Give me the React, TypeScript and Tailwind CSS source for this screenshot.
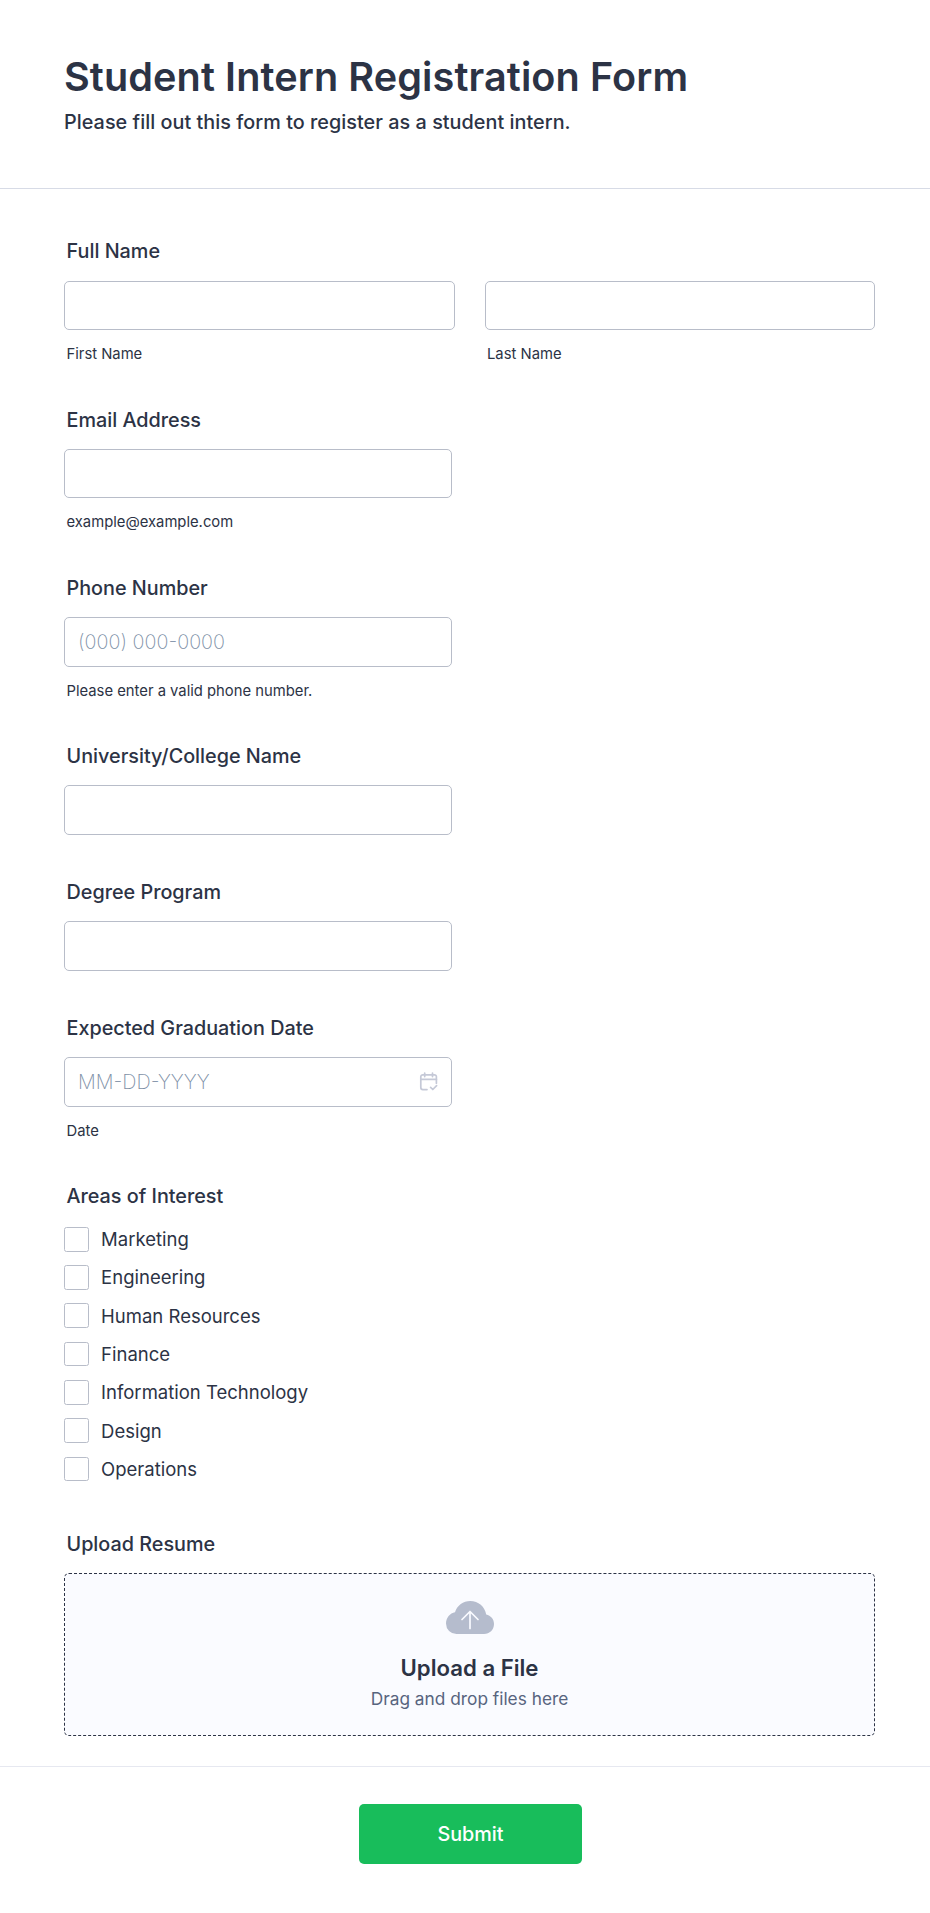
import { useState } from "react";
import type { ReactNode } from "react";

const interests = [
  "Marketing",
  "Engineering",
  "Human Resources",
  "Finance",
  "Information Technology",
  "Design",
  "Operations",
];

function Label({ children }: { children: ReactNode }) {
  return <div className="pl-[2.5px] text-[19.8px] leading-6 font-medium">{children}</div>;
}

function TextInput({ placeholder = "", name }: { placeholder?: string; name: string }) {
  return (
    <input
      type="text"
      aria-label={name}
      placeholder={placeholder}
      className="block w-full h-[49.4px] px-[13px] border border-[#b8bdc9] rounded-[5px] bg-white text-[19.8px] font-extralight outline-none placeholder:text-[#7d8fa6] focus:border-blue-500"
    />
  );
}

function Helper({ children }: { children: ReactNode }) {
  return <div className="mt-[17px] pl-[2.5px] text-[14.8px] leading-[15.1px]">{children}</div>;
}

function Field({ label, helper, placeholder, icon }: { label: string; helper?: string; placeholder?: string; icon?: ReactNode }) {
  return (
    <div className="w-[388px]">
      <Label>{label}</Label>
      <div className="relative mt-[17.4px]">
        <TextInput name={label} placeholder={placeholder} />
        {icon}
      </div>
      {helper && <Helper>{helper}</Helper>}
    </div>
  );
}

function CalendarIcon() {
  return (
    <svg className="absolute right-[14px] top-[15px] w-[19px] h-[19px]" viewBox="0 0 19 19" fill="none" stroke="#c5c9d7" strokeWidth="1.7" strokeLinecap="round" strokeLinejoin="round">
      <path d="M8 17.6H3.8a2 2 0 0 1-2-2V4.8a2 2 0 0 1 2-2h11.6a2 2 0 0 1 2 2v6.4" />
      <path d="M1.8 7.4h15.6M5.7 1v3.6M13.5 1v3.6M11.6 15.4l2.2 2.1 3.8-3.8" />
    </svg>
  );
}

function CloudIcon() {
  return (
    <svg className="w-12 h-[33px]" viewBox="0 0 48 33" fill="none">
      <path d="M10.5 33A10.5 10.5 0 0 1 0 22.5C0 16.6 4 12.2 9 11.2C11.2 4.4 17.2 0 24.2 0C32.3 0 39 5.8 40.2 13.6C44.7 14.5 48 18.3 48 23C48 28.7 43.6 33 38 33Z" fill="#b5bccd" />
      <path d="M24 27.5V10.5M16 18.5l8-8 8 8" stroke="#fafbff" strokeWidth="1.7" strokeLinecap="round" strokeLinejoin="round" />
    </svg>
  );
}

export default function App() {
  const [checked, setChecked] = useState<string[]>([]);

  const toggle = (item: string) =>
    setChecked(checked.includes(item) ? checked.filter((i) => i !== item) : [...checked, item]);

  return (
    <form className="min-h-[1913px] bg-white font-['Inter',sans-serif] text-[#2c3345]" onSubmit={(e) => e.preventDefault()}>
      {/* Header */}
      <header className="h-[189px] px-16 pt-[53px] border-b border-[#d7dbe6]">
        <h1 className="text-[39.6px] leading-[48px] font-semibold tracking-[0.11px]">Student Intern Registration Form</h1>
        <p className="mt-[9px] text-[19.8px] leading-6 font-medium tracking-[0.04px]">Please fill out this form to register as a student intern.</p>
      </header>

      <main className="px-16 pt-[50.4px]">
        <div className="flex flex-col gap-[45.3px]">
          <div className="w-[811px]">
            <Label>Full Name</Label>
            <div className="mt-[17.4px] grid grid-cols-2 gap-[30px]">
              <div>
                <TextInput name="First Name" />
                <Helper>First Name</Helper>
              </div>
              <div>
                <TextInput name="Last Name" />
                <Helper>Last Name</Helper>
              </div>
            </div>
          </div>
          <Field label="Email Address" helper="example@example.com" />
          <Field label="Phone Number" placeholder="(000) 000-0000" helper="Please enter a valid phone number." />
          <Field label="University/College Name" />
          <Field label="Degree Program" />
          <Field label="Expected Graduation Date" placeholder="MM-DD-YYYY" helper="Date" icon={<CalendarIcon />} />

          <div>
            <Label>Areas of Interest</Label>
            <div className="mt-[18.6px] flex flex-col gap-[13.6px]">
              {interests.map((item) => (
                <label key={item} className="flex items-center h-[24.7px] cursor-pointer">
                  <input
                    type="checkbox"
                    checked={checked.includes(item)}
                    onChange={() => toggle(item)}
                    className="appearance-none size-[24.7px] border border-[#b8bdc9] rounded-[2.5px] bg-white checked:bg-blue-500"
                  />
                  <span className="ml-[12.4px] text-[18.5px] leading-6">{item}</span>
                </label>
              ))}
            </div>
          </div>
        </div>

        {/* Upload */}
        <div className="w-[811px] mt-[50.8px]">
          <Label>Upload Resume</Label>
          <div className="mt-[17px] h-[163px] pt-[27px] flex flex-col items-center border border-dashed border-[#2c3345] rounded-[5px] bg-[#fafbff]">
            <CloudIcon />
            <div className="mt-[19.8px] text-[22.2px] leading-7 font-semibold">Upload a File</div>
            <div className="mt-[6px] text-[17.3px] leading-[22px] text-[#57647e]">Drag and drop files here</div>
          </div>
        </div>
      </main>

      <footer className="mt-[30px] pt-[37px] flex justify-center border-t border-[#e6e8f0]">
        <button type="submit" className="ml-[11px] w-[223px] h-[60px] pt-0.5 rounded-[5px] bg-[#18bd5b] text-white text-[19.8px] font-medium">
          Submit
        </button>
      </footer>
    </form>
  );
}
